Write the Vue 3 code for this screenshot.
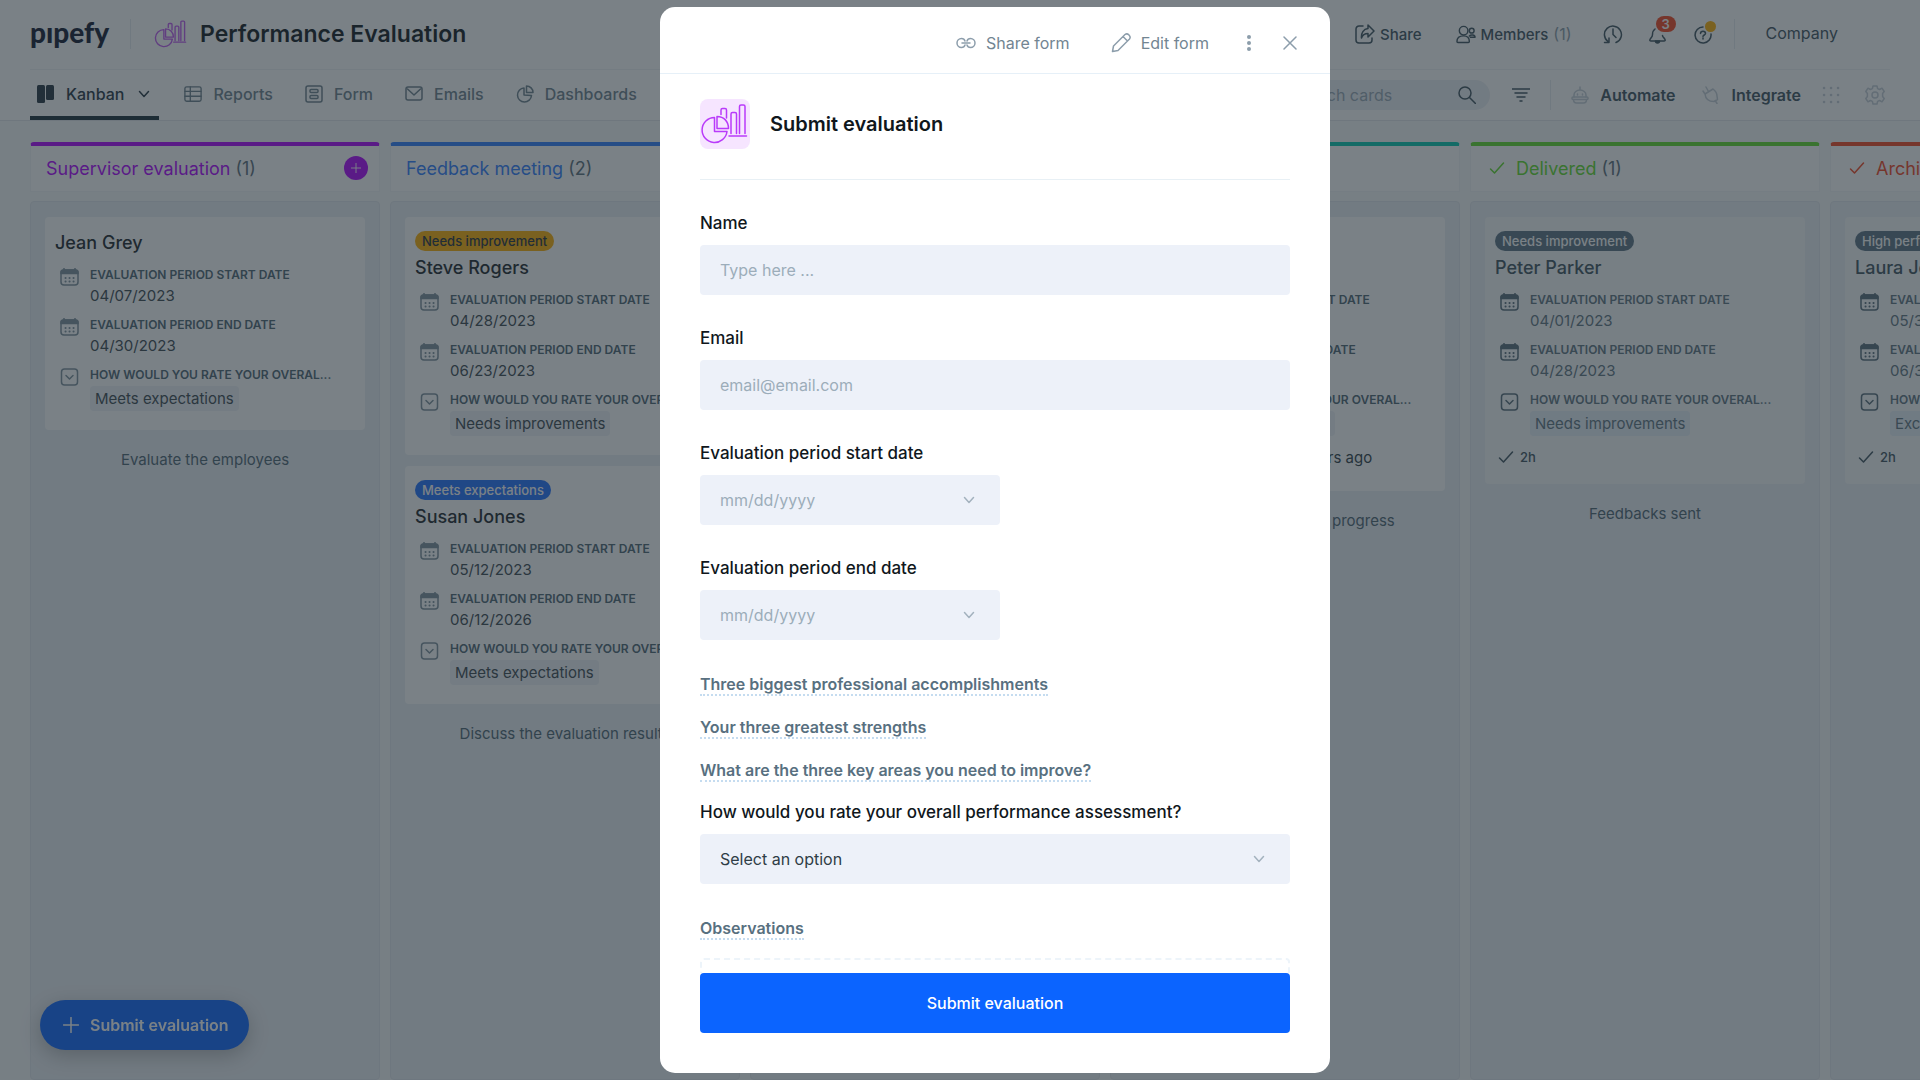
<template>
  <div class="page">
    <!-- Icon sprite -->
    <svg class="sprite" aria-hidden="true">
      <symbol id="i-pipe" viewBox="0 0 50 50">
        <path d="M14.500 18.500A12.500 12.500 0 1 0 27 32.500H14.500z" />
        <path d="M17 17.500v12h11.500c0-7-4.500-12-11.500-12z" />
        <path d="M21 15.500V11q0-1.500 1.500-1.500h2.500q1.500 0 1.500 1.500v8M31 34.500V15q0-1.500 1.500-1.500h2.500q1.500 0 1.500 1.500v19.500M39.500 34.500V7.500Q39.500 6 41 6h2.500Q45 6 45 7.500v27M29 37h17.500" />
      </symbol>
      <symbol id="i-kanban" viewBox="0 0 18 18">
        <rect x="0" y="0" width="8" height="18" rx="1.500" fill="currentColor" stroke="none" />
        <rect x="9" y="0" width="8" height="15" rx="1.500" fill="currentColor" stroke="none" />
      </symbol>
      <symbol id="i-table" viewBox="0 0 20 18">
        <rect x="1" y="1" width="18" height="16" rx="2" />
        <path d="M1 6h18M1 11.500h18M7 1v16" />
      </symbol>
      <symbol id="i-form" viewBox="0 0 18 18">
        <rect x="1" y="1" width="16" height="16" rx="2" />
        <rect x="5" y="4.500" width="8" height="3" rx="1" />
        <rect x="5" y="10.500" width="8" height="3" rx="1" />
      </symbol>
      <symbol id="i-mail" viewBox="0 0 18 18">
        <rect x="1" y="2" width="16" height="13" rx="2" />
        <path d="M2.500 4L9 10l6.500-6" />
      </symbol>
      <symbol id="i-pie" viewBox="0 0 18 18">
        <path d="M8 3a7 7 0 1 0 7.500 7.500L8 10z" />
        <path d="M10.500 1v6.500H17A6.500 6.500 0 0 0 10.500 1z" />
      </symbol>
      <symbol id="i-chevron" viewBox="0 0 12 12"><path d="M1.500 3.500L6 8.500l4.500-5" /></symbol>
      <symbol id="i-share" viewBox="0 0 20 20">
        <path d="M8 2H4a3 3 0 0 0-3 3v11a3 3 0 0 0 3 3h10a3 3 0 0 0 3-3v-2" />
        <path d="M13 1l6 6-6 6V9.500C9.500 9.500 7.500 11 6.500 14c-.5-5 2-9 6.500-9.500z" />
      </symbol>
      <symbol id="i-members" viewBox="0 0 21 20">
        <circle cx="8" cy="6.500" r="4.500" />
        <path d="M1 18c0-4 2.500-6 7-6s6 2 6 6q0 1-1 1H2q-1 0-1-1z" />
        <circle cx="16.500" cy="6.500" r="2.500" />
        <path d="M14 12c1.500-1.500 6-1.500 6 1.500h-5" />
      </symbol>
      <symbol id="i-history" viewBox="0 0 20 20">
        <path d="M5 17.500A8.500 8.500 0 1 1 13 18.500M1.500 18.500H6v-4.500M10 5v5.500l3 3" />
      </symbol>
      <symbol id="i-bell" viewBox="0 0 20 20">
        <path d="M7 5c-2 1.500-2.500 3.500-2.500 5.500 0 2.500-1.500 3-2.500 5-.5 1 0 1.500 1 1.500h13c1 0 1.500-.5 1-1.500-1-2-2.500-2.500-2.500-4" />
        <path d="M7.500 17h4a2 2 0 0 1-4 0z" fill="currentColor" />
      </symbol>
      <symbol id="i-help" viewBox="0 0 20 20">
        <path d="M10 3a8 8 0 1 0 8 7" />
        <path d="M7.500 9.500c0-3 5-3 5 0 0 1.500-2.500 1.500-2.500 3M10 14v1" />
      </symbol>
      <symbol id="i-search" viewBox="0 0 18 18"><circle cx="7" cy="7" r="6" /><path d="M11.500 11.500l6 6" /></symbol>
      <symbol id="i-filter" viewBox="0 0 18 14"><path d="M0 1h18M3 5h12M5 9h8M8 13h2" /></symbol>
      <symbol id="i-robot" viewBox="0 0 18 18">
        <path d="M3 11V9a6 5 0 0 1 12 0v2M9 1v3M6.500 8v1M11.500 8v1" />
        <rect x="1" y="11" width="16" height="2.500" rx="1" />
        <path d="M2.500 13.500q0 3.500 3 3.500h7q3 0 3-3.500" />
      </symbol>
      <symbol id="i-plug" viewBox="0 0 18 18">
        <path d="M3 8l8-5q4 3 4 7l.5 3.500-3.500 2C7 15.500 3.500 13 3 8zM3 8L1 5M6.500 5.500L4 1M13.500 15l1.500 2.500" />
      </symbol>
      <symbol id="i-grid" viewBox="0 0 18 18">
        <path d="M2 2h.1M9 2h.1M16 2h.1M2 9h.1M9 9h.1M16 9h.1M2 16h.1M9 16h.1M16 16h.1" stroke-width="2.500" />
      </symbol>
      <symbol id="i-gear" viewBox="0 0 20 20">
        <circle cx="10" cy="10" r="3" />
        <path d="M8 1h4l.6 2.600 2 .9L17 3.200l2.200 3.300-1.600 2v3l1.600 2L17 16.800l-2.400-1.300-2 .9L12 19H8l-.6-2.600-2-.9L3 16.800.8 13.500l1.600-2v-3l-1.600-2L3 3.200l2.400 1.300 2-.9z" />
      </symbol>
      <symbol id="i-calendar" viewBox="0 0 19 18">
        <rect x="1" y="2" width="17" height="15" rx="3" />
        <path d="M1 5.500V4.500Q1 2 3.500 2h12Q18 2 18 4.500v1zM4 0v3M15 0v3" fill="currentColor" />
        <path d="M5.500 10h.1M9.500 10h.1M13.500 10h.1M5.500 13.500h.1M9.500 13.500h.1M13.500 13.500h.1" stroke-width="2" />
      </symbol>
      <symbol id="i-select" viewBox="0 0 18 18">
        <rect x="1" y="1" width="16" height="16" rx="3" />
        <path d="M5.500 7.500L9 11l3.500-3.500" />
      </symbol>
      <symbol id="i-check" viewBox="0 0 16 16"><path d="M1.500 9L5.500 13 14.500 3" /></symbol>
      <symbol id="i-plus" viewBox="0 0 16 16"><path d="M8 .5v15M.5 8h15" /></symbol>
      <symbol id="i-link" viewBox="0 0 20 12">
        <path d="M9 4C8.500 2.300 7.200 1.500 5.500 1.500a4.500 4.500 0 0 0 0 9C7.200 10.500 8.500 9.700 9 8M11 8c.5 1.700 1.800 2.500 3.500 2.500a4.500 4.500 0 0 0 0-9c-1.700 0-3 .8-3.500 2.500M6 6h8" />
      </symbol>
      <symbol id="i-pencil" viewBox="0 0 20 20">
        <path d="M1.500 18.500l1-5.500L14 1.500q2-1.500 4 .5t.5 4L7 17.500zM12 3.500L16.500 8" />
      </symbol>
      <symbol id="i-dots" viewBox="0 0 6 18">
        <circle cx="3" cy="3" r="2" fill="currentColor" stroke="none" />
        <circle cx="3" cy="9" r="2" fill="currentColor" stroke="none" />
        <circle cx="3" cy="15" r="2" fill="currentColor" stroke="none" />
      </symbol>
      <symbol id="i-close" viewBox="0 0 14 14"><path d="M1 1l12 12M13 1L1 13" /></symbol>
    </svg>

    <!-- Header -->
    <header class="header">
      <div class="topbar">
        <a href="#" class="logo" aria-label="pipefy">pıpefy</a>
        <span class="divider"></span>
        <svg class="icon pipe-icon"><use href="#i-pipe" /></svg>
        <h1 class="pipe-title">Performance Evaluation</h1>
        <div class="top-actions">
          <button class="top-btn"><svg class="icon i20"><use href="#i-share" /></svg>Share</button>
          <button class="top-btn members">
            <svg class="icon i20"><use href="#i-members" /></svg>Members <span class="muted">(1)</span>
          </button>
          <button class="icon-btn" aria-label="History"><svg class="icon i20"><use href="#i-history" /></svg></button>
          <button class="icon-btn" aria-label="Notifications">
            <svg class="icon i20"><use href="#i-bell" /></svg>
            <span class="badge">3</span>
          </button>
          <button class="icon-btn" aria-label="Help">
            <svg class="icon i20"><use href="#i-help" /></svg>
            <span class="dot"></span>
          </button>
          <span class="divider"></span>
          <a href="#" class="company">Company</a>
        </div>
      </div>

      <div class="toolbar">
        <nav class="tabs">
          <a
            v-for="tab in tabs"
            :key="tab.label"
            href="#"
            class="tab"
            :class="{ active: tab.active }"
          >
            <svg class="icon i18"><use :href="'#i-' + tab.icon" /></svg>
            {{ tab.label }}
            <svg v-if="tab.active" class="icon i12"><use href="#i-chevron" /></svg>
          </a>
        </nav>
        <div class="tools">
          <div class="search">
            <input v-model="search" type="text" placeholder="Search cards" aria-label="Search cards" />
            <svg class="icon i18"><use href="#i-search" /></svg>
          </div>
          <button class="tool filter" aria-label="Filter"><svg class="icon i18"><use href="#i-filter" /></svg></button>
          <span class="divider"></span>
          <button class="tool automate"><svg class="icon i18 pale"><use href="#i-robot" /></svg>Automate</button>
          <button class="tool integrate"><svg class="icon i18 pale"><use href="#i-plug" /></svg>Integrate</button>
          <button class="tool apps" aria-label="Apps"><svg class="icon i18 pale"><use href="#i-grid" /></svg></button>
          <button class="tool gear" aria-label="Settings"><svg class="icon i20 pale"><use href="#i-gear" /></svg></button>
        </div>
      </div>
    </header>

    <!-- Board -->
    <main class="board">
      <section v-for="col in columns" :key="col.title" class="column" :class="[col.color, { done: col.done }]">
        <div class="column-head">
          <svg v-if="col.done" class="icon i16"><use href="#i-check" /></svg>
          <h2 class="column-title">{{ col.title }}</h2>
          <span class="count">({{ col.cards.length }})</span>
          <button v-if="col.canAdd" class="add" aria-label="Add card">
            <svg class="icon i10"><use href="#i-plus" /></svg>
          </button>
        </div>
        <div class="column-body">
          <article v-for="card in col.cards" :key="card.name" class="card">
            <span v-if="card.tag" class="tag" :class="card.tagColor">{{ card.tag }}</span>
            <h3 class="card-name">{{ card.name }}</h3>
            <div class="field">
              <svg class="icon field-icon"><use href="#i-calendar" /></svg>
              <div class="field-text">
                <p class="field-label">Evaluation period start date</p>
                <p class="field-value">{{ card.start }}</p>
              </div>
            </div>
            <div class="field">
              <svg class="icon field-icon"><use href="#i-calendar" /></svg>
              <div class="field-text">
                <p class="field-label">Evaluation period end date</p>
                <p class="field-value">{{ card.end }}</p>
              </div>
            </div>
            <div class="field">
              <svg class="icon field-icon"><use href="#i-select" /></svg>
              <div class="field-text">
                <p class="field-label">How would you rate your overal...</p>
                <span class="chip">{{ card.rate }}</span>
              </div>
            </div>
            <p v-if="card.time" class="card-time">
              <svg class="icon i16"><use href="#i-check" /></svg>{{ card.time }}
            </p>
            <p v-if="card.ago" class="card-ago">{{ card.ago }}</p>
          </article>
          <p class="column-note">{{ col.note }}</p>
        </div>
      </section>
    </main>

    <button class="fab"><svg class="icon i16"><use href="#i-plus" /></svg>Submit evaluation</button>

    <!-- Start form -->
    <div class="overlay">
      <form class="modal" role="dialog" aria-labelledby="formTitle" @submit.prevent>
        <div class="modal-head">
          <button type="button" class="modal-btn"><svg class="icon i20"><use href="#i-link" /></svg>Share form</button>
          <button type="button" class="modal-btn edit"><svg class="icon i20"><use href="#i-pencil" /></svg>Edit form</button>
          <button type="button" class="modal-btn dots" aria-label="More"><svg class="icon i18"><use href="#i-dots" /></svg></button>
          <button type="button" class="modal-btn close" aria-label="Close"><svg class="icon i14"><use href="#i-close" /></svg></button>
        </div>

        <div class="modal-body">
          <div class="form-head">
            <span class="form-icon"><svg class="icon"><use href="#i-pipe" /></svg></span>
            <h2 id="formTitle" class="form-title">Submit evaluation</h2>
          </div>

          <div class="form-group">
            <label for="name" class="label">Name</label>
            <input id="name" v-model="form.name" type="text" class="input" placeholder="Type here ..." />
          </div>
          <div class="form-group">
            <label for="email" class="label">Email</label>
            <input id="email" v-model="form.email" type="email" class="input" placeholder="email@email.com" />
          </div>
          <div class="form-group">
            <label for="start" class="label">Evaluation period start date</label>
            <div class="input-wrap date">
              <input id="start" v-model="form.start" type="text" class="input" placeholder="mm/dd/yyyy" />
              <svg class="icon i12 arrow"><use href="#i-chevron" /></svg>
            </div>
          </div>
          <div class="form-group">
            <label for="end" class="label">Evaluation period end date</label>
            <div class="input-wrap date">
              <input id="end" v-model="form.end" type="text" class="input" placeholder="mm/dd/yyyy" />
              <svg class="icon i12 arrow"><use href="#i-chevron" /></svg>
            </div>
          </div>

          <div class="links">
            <a v-for="q in questions" :key="q" href="#" class="question">{{ q }}</a>
          </div>

          <div class="form-group">
            <label for="rate" class="label">How would you rate your overall performance assessment?</label>
            <div class="input-wrap">
              <select id="rate" v-model="form.rate" class="input select">
                <option value="">Select an option</option>
                <option v-for="r in rates" :key="r" :value="r">{{ r }}</option>
              </select>
              <svg class="icon i12 arrow"><use href="#i-chevron" /></svg>
            </div>
          </div>

          <div class="links">
            <a href="#" class="question">Observations</a>
          </div>
          <div class="extra"></div>
        </div>

        <div class="modal-foot">
          <button type="submit" class="submit">Submit evaluation</button>
        </div>
      </form>
    </div>
  </div>
</template>

<script setup>
import { reactive, ref } from 'vue'

const search = ref('')

const form = reactive({
  name: '',
  email: '',
  start: '',
  end: '',
  rate: ''
})

const tabs = [
  { label: 'Kanban', icon: 'kanban', active: true },
  { label: 'Reports', icon: 'table' },
  { label: 'Form', icon: 'form' },
  { label: 'Emails', icon: 'mail' },
  { label: 'Dashboards', icon: 'pie' }
]

const questions = [
  'Three biggest professional accomplishments',
  'Your three greatest strengths',
  'What are the three key areas you need to improve?'
]

const rates = ['Needs improvements', 'Meets expectations', 'Exceeds expectations']

const columns = [
  {
    title: 'Supervisor evaluation',
    color: 'purple',
    canAdd: true,
    note: 'Evaluate the employees',
    cards: [
      { name: 'Jean Grey', start: '04/07/2023', end: '04/30/2023', rate: 'Meets expectations' }
    ]
  },
  {
    title: 'Feedback meeting',
    color: 'blue',
    note: 'Discuss the evaluation results',
    cards: [
      { name: 'Steve Rogers', tag: 'Needs improvement', tagColor: 'orange', start: '04/28/2023', end: '06/23/2023', rate: 'Needs improvements' },
      { name: 'Susan Jones', tag: 'Meets expectations', tagColor: 'blue', start: '05/12/2023', end: '06/12/2026', rate: 'Meets expectations' }
    ]
  },
  { title: 'Action plan', color: 'teal', note: '', cards: [] },
  {
    title: 'Follow-up',
    color: 'teal',
    note: 'Development plans in progress',
    cards: [
      { name: 'Mary Smith', tag: 'High performance', tagColor: 'blue', start: '04/03/2023', end: '05/31/2023', rate: 'Exceeds expectations', ago: 'Last updated over 2 years ago' }
    ]
  },
  {
    title: 'Delivered',
    color: 'green',
    done: true,
    note: 'Feedbacks sent',
    cards: [
      { name: 'Peter Parker', tag: 'Needs improvement', tagColor: 'gray', start: '04/01/2023', end: '04/28/2023', rate: 'Needs improvements', time: '2h' }
    ]
  },
  {
    title: 'Archived',
    color: 'red',
    done: true,
    note: '',
    cards: [
      { name: 'Laura Jones', tag: 'High performance', tagColor: 'gray', start: '05/30/2023', end: '06/30/2023', rate: 'Exceeds expectations', time: '2h' }
    ]
  }
]
</script>

<style>
body {
  overflow: hidden;
}
</style>

<style scoped>
.page {
  display: flex;
  flex-direction: column;
  height: 100vh;
  overflow: hidden;
  background: #f8f9fb;
  font-family: Inter, 'Liberation Sans', sans-serif;
  font-size: 16px;
  color: #3c515c;
}

h1, h2, h3, p {
  margin: 0;
  font-weight: 500;
}
a {
  color: inherit;
  text-decoration: none;
}
button {
  display: flex;
  align-items: center;
  padding: 0;
  border: none;
  background: none;
  font: inherit;
  color: inherit;
  cursor: pointer;
}

/* Icons */
.sprite {
  position: absolute;
  width: 0;
  height: 0;
}
.icon {
  flex: none;
  fill: none;
  stroke: currentColor;
  stroke-width: 1.5;
  stroke-linecap: round;
  stroke-linejoin: round;
}
.i10 { width: 10px; height: 10px; }
.i12 { width: 12px; height: 12px; }
.i14 { width: 14px; height: 14px; }
.i16 { width: 16px; height: 16px; }
.i18 { width: 18px; height: 18px; }
.i20 { width: 20px; height: 20px; }
.pale {
  color: #c5ced6;
}
.divider {
  width: 1px;
  height: 30px;
  background: #e6eaef;
}

/* Header */
.header {
  flex: none;
  padding: 0 30px;
  background: #fff;
  border-bottom: 1px solid #e3e7ec;
}
.topbar {
  display: flex;
  align-items: center;
  height: 70px;
  padding-bottom: 1px;
  border-bottom: 1px solid #eff2f6;
  box-sizing: border-box;
}
.logo {
  width: 100px;
  padding-bottom: 4px;
  font-family: Lato, sans-serif;
  font-size: 28px;
  font-weight: 900;
  line-height: 28px;
  color: #10182f;
}
.pipe-icon {
  width: 34px;
  height: 34px;
  margin: 0 12px 0 23px;
  color: #c058f0;
  stroke-width: 2;
}
.pipe-title {
  font-size: 23px;
  font-weight: 600;
  color: #10171c;
}
.top-actions {
  display: flex;
  align-items: center;
  margin-left: auto;
  padding-right: 52px;
  font-size: 15px;
  font-weight: 500;
}
.top-btn {
  gap: 5px;
}
.members {
  margin: 0 31px 0 34px;
}
.muted {
  font-size: 16px;
  font-weight: 400;
  color: #8a9ba8;
}
.icon-btn {
  position: relative;
  margin-right: 25px;
}
.icon-btn:last-of-type {
  margin-right: 21px;
}
.badge {
  position: absolute;
  top: -8px;
  left: 8px;
  width: 20px;
  border-radius: 8px;
  background: #f5451f;
  color: #fff;
  font-size: 13px;
  font-weight: 600;
  line-height: 16px;
  text-align: center;
}
.dot {
  position: absolute;
  top: -3px;
  left: 12px;
  width: 11px;
  height: 11px;
  border-radius: 50%;
  background: #ffae00;
}
.company {
  margin-left: 31px;
  padding-bottom: 2px;
  font-size: 16px;
  font-weight: 400;
}

/* Toolbar */
.toolbar {
  display: flex;
  justify-content: space-between;
  height: 50px;
  font-weight: 500;
}
.tabs {
  display: flex;
  gap: 32px;
}
.tab {
  display: flex;
  align-items: center;
  gap: 11px;
  padding: 0 0 3px;
  color: #6d808c;
}
.tab.active {
  margin-right: -7px;
  padding: 1px 9px 0 7px;
  border-bottom: 4px solid #1b2d38;
  color: #24343f;
}
.tab.active .i12 {
  margin-left: 3px;
}
.tools {
  display: flex;
  align-items: center;
  padding-bottom: 1px;
}
.search {
  display: flex;
  align-items: center;
  width: 214px;
  height: 30px;
  padding: 0 14px 0 16px;
  border-radius: 15px;
  background: #eceff4;
  box-sizing: border-box;
}
.search input {
  flex: 1;
  min-width: 0;
  padding: 0;
  border: none;
  background: none;
  font: inherit;
  font-weight: 400;
}
.search input::placeholder {
  color: #97a7b5;
}
.tool {
  gap: 11px;
  font-weight: 600;
}
.filter {
  margin: 0 20px 0 22px;
}
.automate {
  margin: 0 27px 0 20px;
}
.apps {
  margin: 0 25px 0 21px;
}
.gear {
  margin-right: 5px;
}

/* Board */
.board {
  display: flex;
  flex: 1;
  gap: 10px;
  padding: 21px 0 0 30px;
}
.column {
  display: flex;
  flex: none;
  flex-direction: column;
  width: 350px;
}
.column-head {
  display: flex;
  align-items: center;
  gap: 5px;
  height: 50px;
  padding: 0 11px 1px 15px;
  border: 1px solid #f3f5f8;
  border-top: 4px solid var(--accent);
  border-radius: 4px 4px 0 0;
  background: #fff;
  box-sizing: border-box;
  font-size: 18px;
  color: var(--accent);
}
.column-head > .icon {
  margin: 0 6px 0 3px;
}
.column-title {
  font-size: 18px;
  font-weight: 400;
}
.count {
  color: #5b6e7a;
}
.add {
  justify-content: center;
  width: 24px;
  height: 24px;
  margin-left: auto;
  border-radius: 50%;
  background: var(--accent);
  color: #fff;
}
.purple { --accent: #b000ff; }
.blue { --accent: #2f7dff; }
.teal { --accent: #00c8b0; }
.green { --accent: #5fdc28; }
.red { --accent: #f5451f; }

.column-body {
  flex: 1;
  margin-top: 9px;
  padding: 15px 14px;
  border: 1px solid #e2e7ed;
  border-radius: 4px;
  background: #eceff4;
}
.card {
  display: flex;
  flex-direction: column;
  margin-bottom: 11px;
  padding: 14px 10px 19px;
  border-radius: 4px;
  background: #fff;
}
.card-name {
  margin-bottom: 10px;
  font-size: 18px;
  line-height: 24px;
  color: #1a2328;
}
.tag {
  align-self: flex-start;
  margin-bottom: 5px;
  padding: 0 7px;
  border-radius: 10px;
  color: #fff;
  font-size: 13px;
  font-weight: 500;
  line-height: 20px;
}
.tag.orange {
  background: #ffae00;
  color: #1f2f3a;
}
.tag.blue {
  background: #2070ff;
}
.tag.gray {
  background: #5a7282;
}
.field {
  display: flex;
  gap: 11px;
  margin-bottom: 8px;
  padding-left: 5px;
}
.field:last-of-type {
  margin-bottom: 0;
}
.field-icon {
  width: 19px;
  height: 18px;
  margin-top: 3px;
  color: #7d909c;
}
.field-label {
  font-size: 12px;
  font-weight: 600;
  line-height: 20px;
  text-transform: uppercase;
  color: #4c6472;
}
.field-value {
  font-size: 15px;
  font-weight: 400;
  line-height: 22px;
  color: #3a474f;
}
.chip {
  display: inline-block;
  margin-top: 1px;
  padding: 0 5px;
  border-radius: 4px;
  background: #f0f3f7;
  color: #3a474f;
  font-size: 15px;
  line-height: 25px;
}
.card-time {
  display: flex;
  align-items: center;
  gap: 6px;
  margin-top: 13px;
  padding-left: 3px;
  font-size: 13px;
  line-height: 16px;
}
.card-ago {
  margin: 12px 0 4px;
  padding-left: 22px;
  font-size: 15px;
  font-weight: 400;
  line-height: 20px;
  color: #2c3b44;
}
.done .card {
  background: #f7f9fb;
}
.done .card-name {
  color: #3c515c;
}
.done .field-icon {
  color: #566b78;
}
.done .field-label,
.done .field-value,
.done .chip {
  color: #5d7380;
}
.done .chip {
  background: #e6eff8;
}
.column-note {
  margin-top: 20px;
  font-size: 15px;
  font-weight: 400;
  line-height: 20px;
  text-align: center;
  color: #4c6472;
}

.fab {
  position: fixed;
  bottom: 30px;
  left: 40px;
  gap: 11px;
  height: 50px;
  padding: 0 20px 0 23px;
  border-radius: 25px;
  background: #0b64ff;
  box-shadow: 0 6px 20px rgba(0, 0, 0, 0.25);
  color: #fff;
  font-weight: 600;
}

/* Modal */
.overlay {
  position: fixed;
  inset: 0;
  display: flex;
  align-items: center;
  justify-content: center;
  padding-left: 70px;
  background: rgba(33, 45, 53, 0.6);
}
.modal {
  display: flex;
  flex-direction: column;
  width: 670px;
  height: calc(100vh - 14px);
  border-radius: 15px;
  background: #fff;
}
.modal-head {
  display: flex;
  flex: none;
  align-items: center;
  justify-content: flex-end;
  height: 67px;
  padding: 5px 33px 0 0;
  border-bottom: 1px solid #e6f0f8;
  box-sizing: border-box;
}
.modal-btn {
  gap: 10px;
  color: #728592;
}
.modal-btn .icon {
  color: #8c9dab;
}
.edit {
  margin-left: 41px;
}
.dots {
  margin: 0 25px 0 31px;
}
.modal-body {
  flex: 1;
  min-height: 0;
  overflow: hidden;
  padding: 0 40px;
}
.form-head {
  display: flex;
  align-items: center;
  gap: 20px;
  margin-bottom: 31px;
  padding: 25px 0 30px;
  border-bottom: 1px solid #e8f0f5;
}
.form-icon {
  display: flex;
  width: 50px;
  height: 50px;
  border-radius: 8px;
  background: #f6e5ff;
  color: #b93bfa;
}
.form-icon .icon {
  width: 50px;
  height: 50px;
}
.form-title {
  font-size: 20px;
  font-weight: 600;
  color: #10171c;
}
.form-group {
  margin-bottom: 31px;
}
.label {
  display: block;
  margin-bottom: 10px;
  font-size: 17px;
  font-weight: 500;
  line-height: 24px;
  color: #10171c;
}
.input-wrap {
  position: relative;
}
.date {
  width: 300px;
}
.input {
  display: block;
  width: 100%;
  height: 50px;
  padding: 0 20px;
  border: none;
  border-radius: 4px;
  background: #edf1f9;
  box-sizing: border-box;
  font: inherit;
  color: #2f3d46;
}
.input::placeholder {
  color: #9cadba;
}
.select {
  appearance: none;
}
.arrow {
  position: absolute;
  top: 19px;
  right: 25px;
  color: #a3b2be;
}
.links {
  display: flex;
  flex-direction: column;
  align-items: flex-start;
  gap: 21px;
  margin: 34px 0 18px;
}
.question {
  border-bottom: 2px dotted #c5dcf0;
  font-weight: 600;
  line-height: 20px;
  color: #587080;
}
.extra {
  height: 60px;
  border: 2px dashed #edf4fa;
  border-radius: 4px;
}
.modal-foot {
  flex: none;
  padding: 0 40px 40px;
}
.submit {
  justify-content: center;
  width: 100%;
  height: 60px;
  border-radius: 4px;
  background: #0b64ff;
  color: #fff;
  font-weight: 500;
}
</style>
